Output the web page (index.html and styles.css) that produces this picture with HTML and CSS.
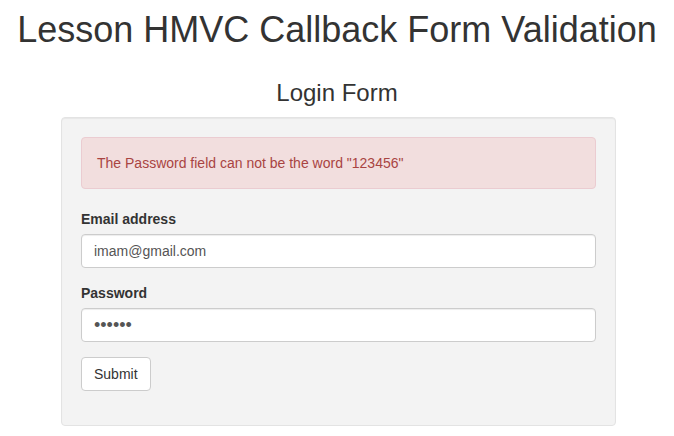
FILE: index.html
```html
<!DOCTYPE html>
<html>
<head>
<meta charset="utf-8">
<title>Lesson HMVC Callback Form Validation</title>
<link rel="stylesheet" href="styles.css">
</head>
<body>
<h1 class="page-title">Lesson HMVC Callback Form Validation</h1>
<h3 class="form-title">Login Form</h3>
<div class="well">
  <div class="alert">The Password field can not be the word "123456"</div>
  <form class="login-form">
    <div class="form-group">
      <label class="form-label" for="email">Email address</label>
      <input class="form-control" id="email" type="text" value="imam@gmail.com">
    </div>
    <div class="form-group">
      <label class="form-label" for="password">Password</label>
      <input class="form-control password" id="password" type="password" value="123456">
    </div>
    <button class="btn" type="button">Submit</button>
  </form>
</div>
</body>
</html>
```

FILE: styles.css
```css
* {
  box-sizing: border-box;
}
html, body {
  margin: 0;
  padding: 0;
  background: #fff;
}
body {
  font-family: "Liberation Sans", Arial, sans-serif;
  font-size: 14px;
  line-height: 20px;
  color: #333;
}
.page-title {
  margin: 10px 0 0;
  font-size: 36px;
  font-weight: 500;
  line-height: 39.6px;
  text-align: center;
  color: #333;
}
.form-title {
  margin: 30px 0 11px;
  font-size: 24px;
  font-weight: 500;
  line-height: 26.4px;
  text-align: center;
  color: #333;
}
.well {
  width: 555px;
  margin-left: 61px;
  padding: 19px 19px 34px;
  background: #f3f3f3;
  border: 1px solid #e3e3e3;
  border-radius: 4px;
  box-shadow: inset 0 1px 1px rgba(0,0,0,.05);
}
.alert {
  padding: 15px;
  margin-bottom: 20px;
  background: #f2dede;
  border: 1px solid #ebccd1;
  border-radius: 4px;
  color: #a94442;
}
.login-form {
  margin: 0;
}
.form-group {
  margin-bottom: 15px;
}
.form-label {
  display: block;
  margin-bottom: 5px;
  font-weight: bold;
  color: #333;
}
.form-control {
  display: block;
  width: 100%;
  height: 34px;
  padding: 6px 12px;
  font-family: "Liberation Sans", Arial, sans-serif;
  font-size: 14px;
  line-height: 20px;
  color: #555;
  background: #fff;
  border: 1px solid #ccc;
  border-radius: 4px;
  box-shadow: inset 0 1px 1px rgba(0,0,0,.075);
  outline: none;
}
.password {
  font-size: 18px;
  padding: 5px 12px;
}
.btn {
  display: inline-block;
  height: 34px;
  padding: 6px 12px;
  font-family: "Liberation Sans", Arial, sans-serif;
  font-size: 14px;
  line-height: 20px;
  color: #333;
  background: #fff;
  border: 1px solid #ccc;
  border-radius: 4px;
  cursor: pointer;
}
```
